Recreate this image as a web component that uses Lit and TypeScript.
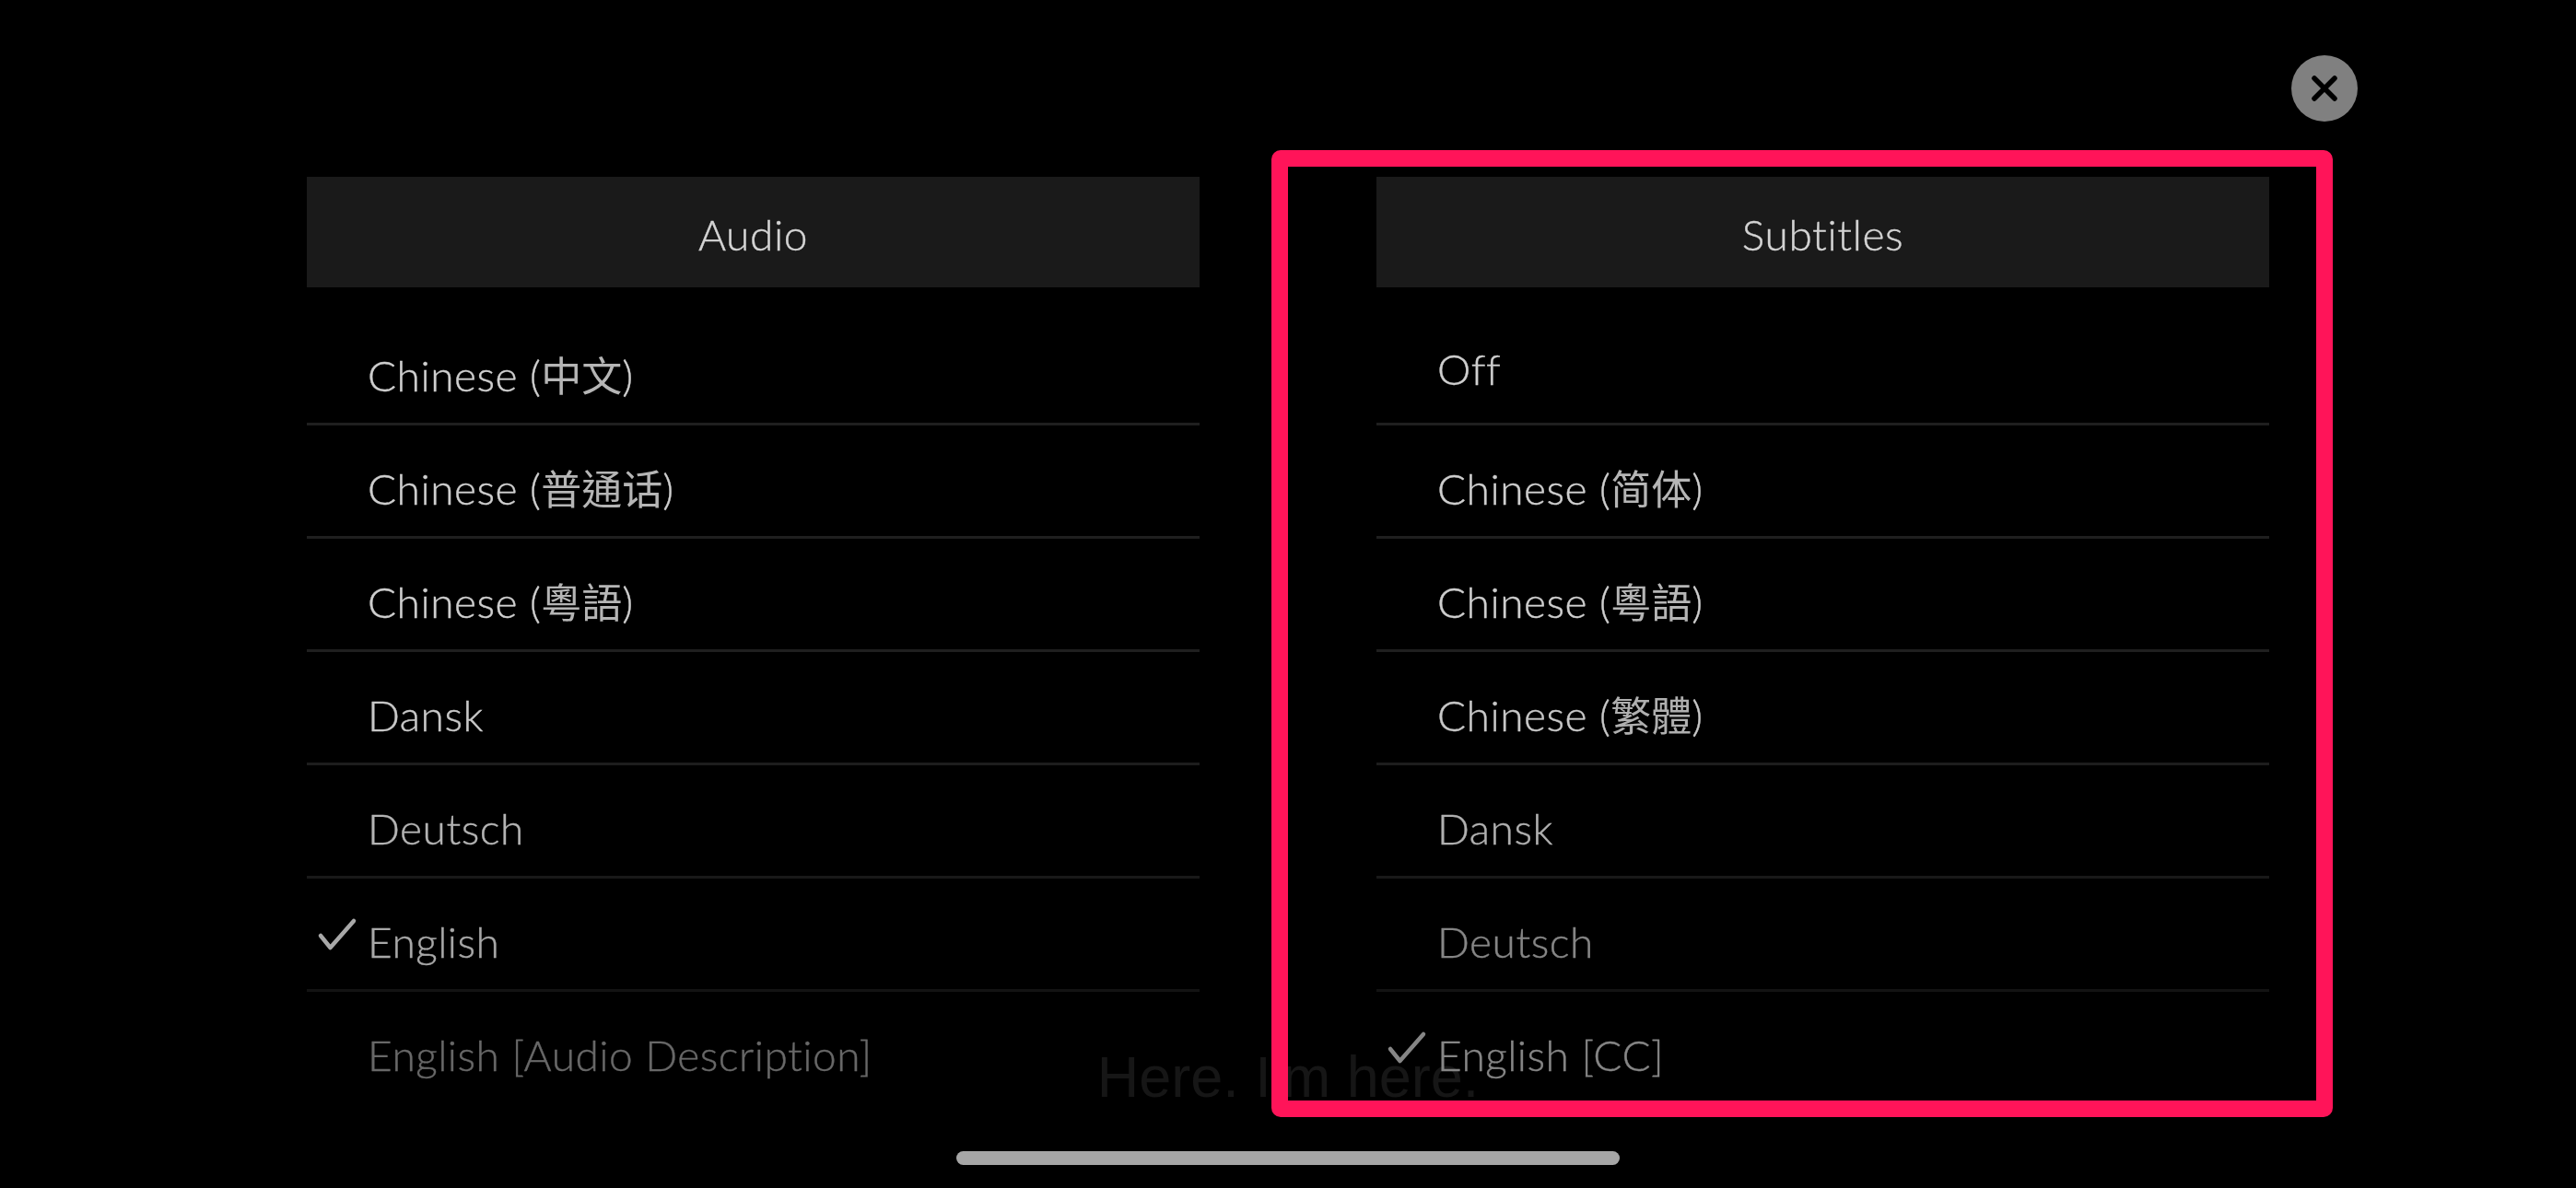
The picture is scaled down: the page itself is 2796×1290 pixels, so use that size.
import { LitElement, html, css } from "lit";
import { customElement } from "lit/decorators.js";

interface Item { label: string; color: string; line?: string; checked?: boolean; off?: boolean; }

const AUDIO: Item[] = [
  { label: "Chinese (中文)", color: "#cfcfcf", line: "#1f1f1f" },
  { label: "Chinese (普通话)", color: "#cfcfcf", line: "#1f1f1f" },
  { label: "Chinese (粵語)", color: "#cfcfcf", line: "#1f1f1f" },
  { label: "Dansk", color: "#c8c8c8", line: "#1d1d1d" },
  { label: "Deutsch", color: "#b4b4b4", line: "#191919" },
  { label: "English", color: "#a8a8a8", line: "#131313", checked: true },
  { label: "English [Audio Description]", color: "#686868" },
];
const SUBS: Item[] = [
  { label: "Off", color: "#cfcfcf", line: "#1f1f1f", off: true },
  { label: "Chinese (简体)", color: "#cfcfcf", line: "#1f1f1f" },
  { label: "Chinese (粵語)", color: "#cfcfcf", line: "#1f1f1f" },
  { label: "Chinese (繁體)", color: "#c8c8c8", line: "#1d1d1d" },
  { label: "Dansk", color: "#b0b0b0", line: "#191919" },
  { label: "Deutsch", color: "#868686", line: "#131313" },
  { label: "English [CC]", color: "#868686", checked: true },
];

@customElement("app-root")
export class AppRoot extends LitElement {
  static styles = css`
    :host { display: block; width: 2796px; height: 1290px; background: #000; overflow: hidden; }
    .screen {
      position: relative; width: 2796px; height: 1290px; box-sizing: border-box; padding-top: 192px;
      display: flex; flex-direction: column; align-items: center; background: #000;
      font-family: "Lato", "Noto Sans CJK TC", sans-serif; font-weight: 300; font-size: 46px;
      font-variant-ligatures: none; letter-spacing: 0.5px;
    }
    .caption {
      position: absolute; left: 0; right: 0; top: 1129px; text-align: center; color: #161616;
      font: 400 63px/80px "Liberation Sans", sans-serif; letter-spacing: 0;
    }
    .panels { position: relative; display: flex; gap: 192px; will-change: transform; }
    .panel { position: relative; width: 969px; }
    .header {
      height: 120px; box-sizing: border-box; padding-top: 6px; background: #1a1a1a; color: #d4d4d4;
      display: flex; align-items: center; justify-content: center; line-height: 60px; margin-bottom: 27px;
      letter-spacing: 0.6px; -webkit-text-stroke: 0.4px currentColor;
    }
    .row {
      height: 123px; box-sizing: border-box; border-bottom: 3px solid transparent;
      display: grid; grid-template-columns: 66px 1fr; line-height: 60px;
    }
    .label { grid-column: 2; grid-row: 1; padding-top: 39px; white-space: nowrap; -webkit-text-stroke: 0.4px currentColor; }
    .row.off .label { padding-top: 32px; }
    .cjk { font-weight: 400; font-size: 44px; letter-spacing: 0; opacity: 0.88; -webkit-text-stroke: 0; }
    .check { grid-column: 1; grid-row: 1; width: 44px; height: 40px; margin: 42px 0 0 11px; display: block; }
    .highlight {
      position: absolute; left: -114px; right: -69px; top: -29px; bottom: -13px;
      border: 18px solid #ff1459; border-radius: 10px; pointer-events: none;
    }
    .close {
      position: absolute; left: 2487px; top: 60px; width: 72px; height: 72px; border-radius: 50%;
      background: #808080; display: flex; align-items: center; justify-content: center;
    }
    .close svg { width: 32px; height: 32px; display: block; }
    .home { width: 720px; height: 15px; border-radius: 8px; background: #a6a6a6; margin-top: 50px; }
  `;

  private renderLabel(label: string) {
    const m = label.match(/^(.*\()(.+)(\))$/);
    if (!m) return label;
    return html`${m[1]}<span class="cjk">${m[2]}</span>${m[3]}`;
  }

  private renderRow(item: Item) {
    const style = `color:${item.color};${item.line ? `border-bottom-color:${item.line};` : ""}`;
    return html`<div class="row ${item.off ? "off" : ""}" style=${style}>
      ${item.checked
        ? html`<svg class="check" viewBox="0 0 44 40" fill="none" stroke="currentColor" stroke-width="4.5" stroke-linecap="round" stroke-linejoin="round"><path d="M4 20L14.5 33L40 4"/></svg>`
        : null}
      <span class="label">${this.renderLabel(item.label)}</span>
    </div>`;
  }

  render() {
    return html`<div class="screen">
      <div class="caption">Here. I'm here.</div>
      <div class="panels">
        <section class="panel">
          <div class="header">Audio</div>
          ${AUDIO.map((i) => this.renderRow(i))}
        </section>
        <section class="panel">
          <div class="header">Subtitles</div>
          ${SUBS.map((i) => this.renderRow(i))}
          <div class="highlight"></div>
        </section>
      </div>
      <div class="home"></div>
      <div class="close">
        <svg viewBox="0 0 32 32" fill="none" stroke="#000" stroke-width="5.5" stroke-linecap="round"><path d="M5 5L27 27M27 5L5 27"/></svg>
      </div>
    </div>`;
  }
}
